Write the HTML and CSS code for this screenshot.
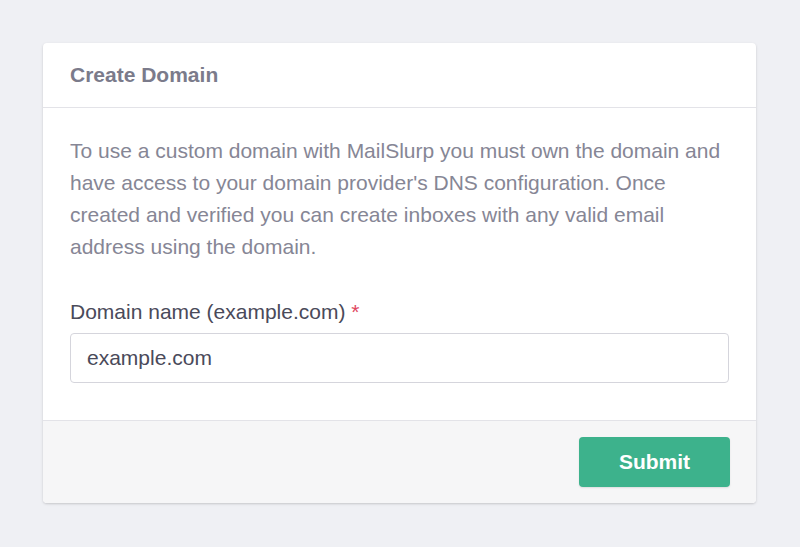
FILE: index.html
```html
<!DOCTYPE html>
<html>
<head>
<meta charset="utf-8">
<link rel="stylesheet" href="styles.css">
</head>
<body>
<div class="page">
  <div class="card">
    <div class="card-header">Create Domain</div>
    <div class="card-body">
      <p class="desc">To use a custom domain with MailSlurp you must own the domain and have access to your domain provider's DNS configuration. Once created and verified you can create inboxes with any valid email address using the domain.</p>
      <label class="label">Domain name (example.com) <span class="req">*</span></label>
      <div class="input">example.com</div>
    </div>
    <div class="card-footer">
      <button class="btn">Submit</button>
    </div>
  </div>
</div>
</body>
</html>
```
FILE: styles.css
```css
html, body {
  margin: 0;
  padding: 0;
  background: #eff0f4;
  font-family: "Liberation Sans", Arial, sans-serif;
}
.page {
  padding: 43px 44px 44px 43px;
}
.card {
  background: #fff;
  border-radius: 4px;
  box-shadow: 0 1px 3px rgba(0,0,0,0.12), 0 1px 2px rgba(0,0,0,0.06);
  overflow: hidden;
}
.card-header {
  height: 65px;
  box-sizing: border-box;
  padding: 0 27px;
  display: flex;
  align-items: center;
  font-size: 21px;
  font-weight: bold;
  color: #7b7b8b;
  border-bottom: 1px solid #e3e3e8;
}
.card-body {
  padding: 27px 27px 37px;
}
.desc {
  margin: 0;
  font-size: 21px;
  line-height: 32px;
  color: #868695;
}
.label {
  display: block;
  margin-top: 37px;
  font-size: 21px;
  line-height: 24px;
  color: #4a4a5a;
}
.req {
  color: #e0465e;
}
.input {
  margin-top: 9px;
  height: 50px;
  box-sizing: border-box;
  border: 1px solid #d5d5dc;
  border-radius: 4px;
  padding: 0 16px;
  display: flex;
  align-items: center;
  font-size: 21px;
  color: #4a4a5a;
}
.card-footer {
  background: #f6f6f7;
  border-top: 1px solid #e3e3e8;
  padding: 16px 26px 16px;
  display: flex;
  justify-content: flex-end;
}
.btn {
  width: 151px;
  height: 50px;
  background: #3db28c;
  color: #fff;
  border: none;
  border-radius: 4px;
  font-family: "Liberation Sans", Arial, sans-serif;
  font-size: 21px;
  font-weight: bold;
  box-shadow: 0 1px 2px rgba(0,0,0,0.1);
}
```
